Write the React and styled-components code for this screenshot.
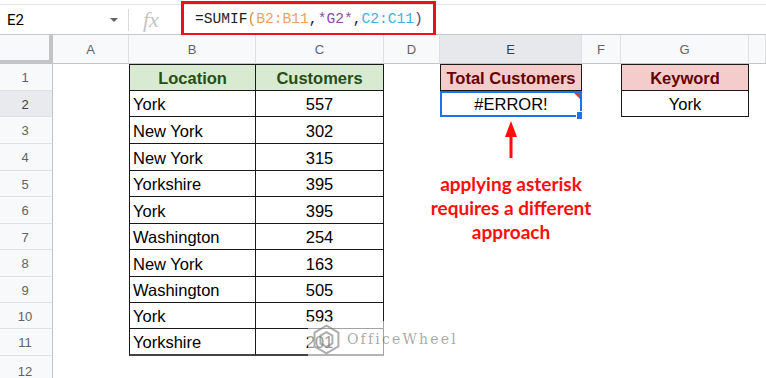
import React from "react";
import styled, { createGlobalStyle } from "styled-components";

const GlobalStyle = createGlobalStyle`
  html, body { margin: 0; padding: 0; background: #fff; }
  body { font-family: "Liberation Sans", Arial, sans-serif; overflow: hidden; }
`;

const Page = styled.div`
  position: relative;
  width: 766px;
  height: 378px;
  overflow: hidden;
  background: #fff;
`;

/* ---------- formula bar ---------- */
const FormulaBar = styled.div`
  margin-top: 4px;
  height: 31px;
  box-sizing: border-box;
  border-top: 1px solid #e3e3e3;
  border-bottom: 1px solid #c7c7c7;
  display: flex;
  align-items: center;
`;

const NameBox = styled.div`
  width: 128px;
  box-sizing: border-box;
  padding: 0 10px 0 7px;
  display: flex;
  align-items: center;
  justify-content: space-between;
  font-family: Roboto, "Liberation Sans", sans-serif;
  font-size: 15px;
  color: #000;
`;

const Caret = styled.span`
  width: 0;
  height: 0;
  border-left: 4px solid transparent;
  border-right: 4px solid transparent;
  border-top: 4px solid #5f6368;
`;

const Divider = styled.div`
  width: 1px;
  height: 22px;
  background: #dadce0;
`;

const FxLabel = styled.div`
  width: 52px;
  box-sizing: border-box;
  padding-left: 14px;
  font-family: "Liberation Serif", serif;
  font-style: italic;
  font-size: 22px;
  color: #c4c4c4;
  line-height: 1;
`;

const FormulaBox = styled.div`
  align-self: flex-start;
  margin: -1px 0 0 3px;
  width: 249px;
  height: 29px;
  box-sizing: border-box;
  outline: 3px solid #f20f0f;
  display: flex;
  align-items: center;
  padding-left: 11px;
  font-family: "Liberation Mono", monospace;
  font-size: 14.6px;
  color: #222;
  white-space: nowrap;
`;

const Tok = styled.span`
  color: ${(p) => p.$c || "#222"};
`;

/* ---------- sheet grid ---------- */
const Sheet = styled.div`
  display: grid;
  grid-template-columns: 53px 76px 127px 128px 56px 142px 39px 128px 17px;
  grid-template-rows: 29px 27px 26px 27px 27px 26px 27px 26px 27px 26px 26px 27px 30px;
`;

const Corner = styled.div`
  grid-column: 1;
  grid-row: 1;
  box-sizing: border-box;
  background: #f8f9fa;
  border-right: 4px solid #c4c4c4;
  border-bottom: 4px solid #c4c4c4;
`;

const ColHeader = styled.div`
  grid-column: ${(p) => p.$col};
  grid-row: 1;
  box-sizing: border-box;
  background: ${(p) => (p.$sel ? "#e6e8eb" : "#f8f9fa")};
  border-right: 1px solid #e0e0e0;
  border-bottom: 1px solid #c4c4c4;
  display: flex;
  align-items: center;
  justify-content: center;
  padding-top: 1px;
  font-family: "Liberation Sans", Arial, sans-serif;
  font-size: 13px;
  color: ${(p) => (p.$sel ? "#3c4043" : "#5f6368")};
`;

const RowHeader = styled.div`
  grid-column: 1;
  grid-row: ${(p) => p.$row};
  box-sizing: border-box;
  background: ${(p) => (p.$sel ? "#e8eaed" : "#f8f9fa")};
  border-right: 1px solid #c4c4c4;
  border-bottom: 1px solid #e0e0e0;
  display: flex;
  align-items: center;
  justify-content: center;
  padding: 1px 2px 0 0;
  font-family: "Liberation Sans", Arial, sans-serif;
  font-size: 13px;
  color: ${(p) => (p.$sel ? "#3c4043" : "#5f6368")};
`;

const Cell = styled.div`
  position: relative;
  grid-column: ${(p) => p.$col};
  grid-row: ${(p) => p.$row};
  box-sizing: border-box;
  background: ${(p) => p.$bg || "#fff"};
  border-top: ${(p) => (p.$t ? "1px solid #1a1a1a" : "0")};
  border-right: ${(p) => (p.$r ? "1px solid #1a1a1a" : "0")};
  border-bottom: ${(p) => (p.$b ? `${p.$thick ? 2 : 1}px solid ${p.$thick ? "#444" : "#1a1a1a"}` : "0")};
  border-left: ${(p) => (p.$l ? "1px solid #1a1a1a" : "0")};
  display: flex;
  align-items: center;
  justify-content: ${(p) => (p.$align === "center" ? "center" : "flex-start")};
  padding-left: ${(p) => (p.$align === "center" ? "0" : "3px")};
  padding-top: 2px;
  font-family: "Liberation Sans", Arial, sans-serif;
  font-size: 16.5px;
  font-weight: ${(p) => (p.$bold ? 700 : 400)};
  color: ${(p) => p.$color || "#000"};
  white-space: nowrap;
`;

const ActiveCell = styled(Cell)`
  border: 2px solid #1a73e8;
  padding-top: 1px;
`;

const ErrorFlag = styled.span`
  position: absolute;
  top: 0;
  right: 0;
  width: 0;
  height: 0;
  border-top: 6px solid #e53935;
  border-left: 6px solid transparent;
`;

const FillHandle = styled.span`
  position: absolute;
  right: -5px;
  bottom: -5px;
  width: 7px;
  height: 7px;
  background: #1a73e8;
  border: 1px solid #fff;
`;

/* ---------- annotation ---------- */
const Annotation = styled.div`
  grid-column: 6;
  grid-row: 4 / 10;
  display: flex;
  flex-direction: column;
  align-items: center;
  padding-top: 4px;
  z-index: 1;
`;

const Note = styled.div`
  margin-top: 14px;
  font-family: Lato, "Liberation Sans", sans-serif;
  font-weight: 700;
  font-size: 19px;
  line-height: 24px;
  color: #ff0d0d;
  text-align: center;
  white-space: nowrap;
`;

/* ---------- watermark ---------- */
const Watermark = styled.div`
  position: absolute;
  left: 308px;
  top: 321px;
  width: 150px;
  height: 36px;
  background: rgba(255, 255, 255, 0.6);
  display: flex;
  align-items: center;
  gap: 7px;
  padding-left: 5px;
  box-sizing: border-box;
`;

const WatermarkText = styled.span`
  font-family: "DejaVu Serif", "Liberation Serif", serif;
  font-size: 14px;
  letter-spacing: 2.2px;
  color: rgba(110, 110, 110, 0.6);
`;

const COLS = ["A", "B", "C", "D", "E", "F", "G", ""];
const DATA = [
  ["York", 557],
  ["New York", 302],
  ["New York", 315],
  ["Yorkshire", 395],
  ["York", 395],
  ["Washington", 254],
  ["New York", 163],
  ["Washington", 505],
  ["York", 593],
  ["Yorkshire", 201],
];

function specFor(row, col) {
  // col: 0=A ... 7=H
  if (row === 1 && (col === 1 || col === 2)) {
    return {
      text: col === 1 ? "Location" : "Customers",
      $bg: "#d9ead3",
      $bold: true,
      $color: "#274e13",
      $align: "center",
      $t: true,
      $r: true,
      $b: true,
      $l: col === 1,
    };
  }
  if (row >= 2 && row <= 11 && col === 1) {
    return { text: DATA[row - 2][0], $l: true, $r: true, $b: true, $thick: row === 11 };
  }
  if (row >= 2 && row <= 11 && col === 2) {
    return { text: DATA[row - 2][1], $align: "center", $r: true, $b: true, $thick: row === 11 };
  }
  if (row === 1 && col === 4) {
    return {
      text: "Total Customers",
      $bg: "#f4cccc",
      $bold: true,
      $color: "#660000",
      $align: "center",
      $t: true,
      $r: true,
      $b: true,
      $l: true,
    };
  }
  if (row === 1 && col === 6) {
    return {
      text: "Keyword",
      $bg: "#f4cccc",
      $bold: true,
      $color: "#660000",
      $align: "center",
      $t: true,
      $r: true,
      $b: true,
      $l: true,
    };
  }
  if (row === 2 && col === 6) {
    return { text: "York", $align: "center", $r: true, $b: true, $l: true };
  }
  return { text: "" };
}

function UpArrow() {
  return (
    <svg width="12" height="37" viewBox="0 0 12 37">
      <polygon points="6,0 12,16 0,16" fill="#ff0d0d" />
      <rect x="4.5" y="14" width="3" height="23" fill="#ff0d0d" />
    </svg>
  );
}

function HexLogo() {
  return (
    <svg width="27" height="31" viewBox="0 0 27 31">
      <g fill="none" stroke="rgba(120,120,120,0.6)" strokeWidth="2">
        <polygon points="13.5,1.5 25.5,8.5 25.5,22.5 13.5,29.5 1.5,22.5 1.5,8.5" />
        <polygon points="13.5,8 19.5,11.5 19.5,19.5 13.5,23 7.5,19.5 7.5,11.5" />
      </g>
    </svg>
  );
}

export default function App() {
  const rows = [];
  for (let r = 1; r <= 12; r++) {
    rows.push(
      <RowHeader key={`rh${r}`} $row={r + 1} $sel={r === 2}>
        {r}
      </RowHeader>
    );
    for (let c = 0; c < 8; c++) {
      if (c === 4 && r >= 3 && r <= 8) continue;
      if (r === 2 && c === 4) {
        rows.push(
          <ActiveCell key={`c${r}-${c}`} $col={c + 2} $row={r + 1} $align="center">
            #ERROR!
            <ErrorFlag />
            <FillHandle />
          </ActiveCell>
        );
        continue;
      }
      const { text, ...props } = specFor(r, c);
      rows.push(
        <Cell key={`c${r}-${c}`} $col={c + 2} $row={r + 1} {...props}>
          {text}
        </Cell>
      );
    }
  }

  return (
    <Page>
      <GlobalStyle />
      <FormulaBar>
        <NameBox>
          E2
          <Caret />
        </NameBox>
        <Divider />
        <FxLabel>fx</FxLabel>
        <FormulaBox>
          <Tok>=SUMIF</Tok>
          <Tok $c="#d9893f">(</Tok>
          <Tok $c="#f2a05a">B2:B11</Tok>
          <Tok>,</Tok>
          <Tok $c="#8a4c9f">*G2*</Tok>
          <Tok>,</Tok>
          <Tok $c="#3fb0e0">C2:C11</Tok>
          <Tok $c="#5a3d8a">)</Tok>
        </FormulaBox>
      </FormulaBar>
      <Sheet>
        <Corner />
        {COLS.map((l, i) => (
          <ColHeader key={`h${i}`} $col={i + 2} $sel={l === "E"}>
            {l}
          </ColHeader>
        ))}
        {rows}
        <Annotation>
          <UpArrow />
          <Note>
            applying asterisk
            <br />
            requires a different
            <br />
            approach
          </Note>
        </Annotation>
      </Sheet>
      <Watermark>
        <HexLogo />
        <WatermarkText>OfficeWheel</WatermarkText>
      </Watermark>
    </Page>
  );
}
